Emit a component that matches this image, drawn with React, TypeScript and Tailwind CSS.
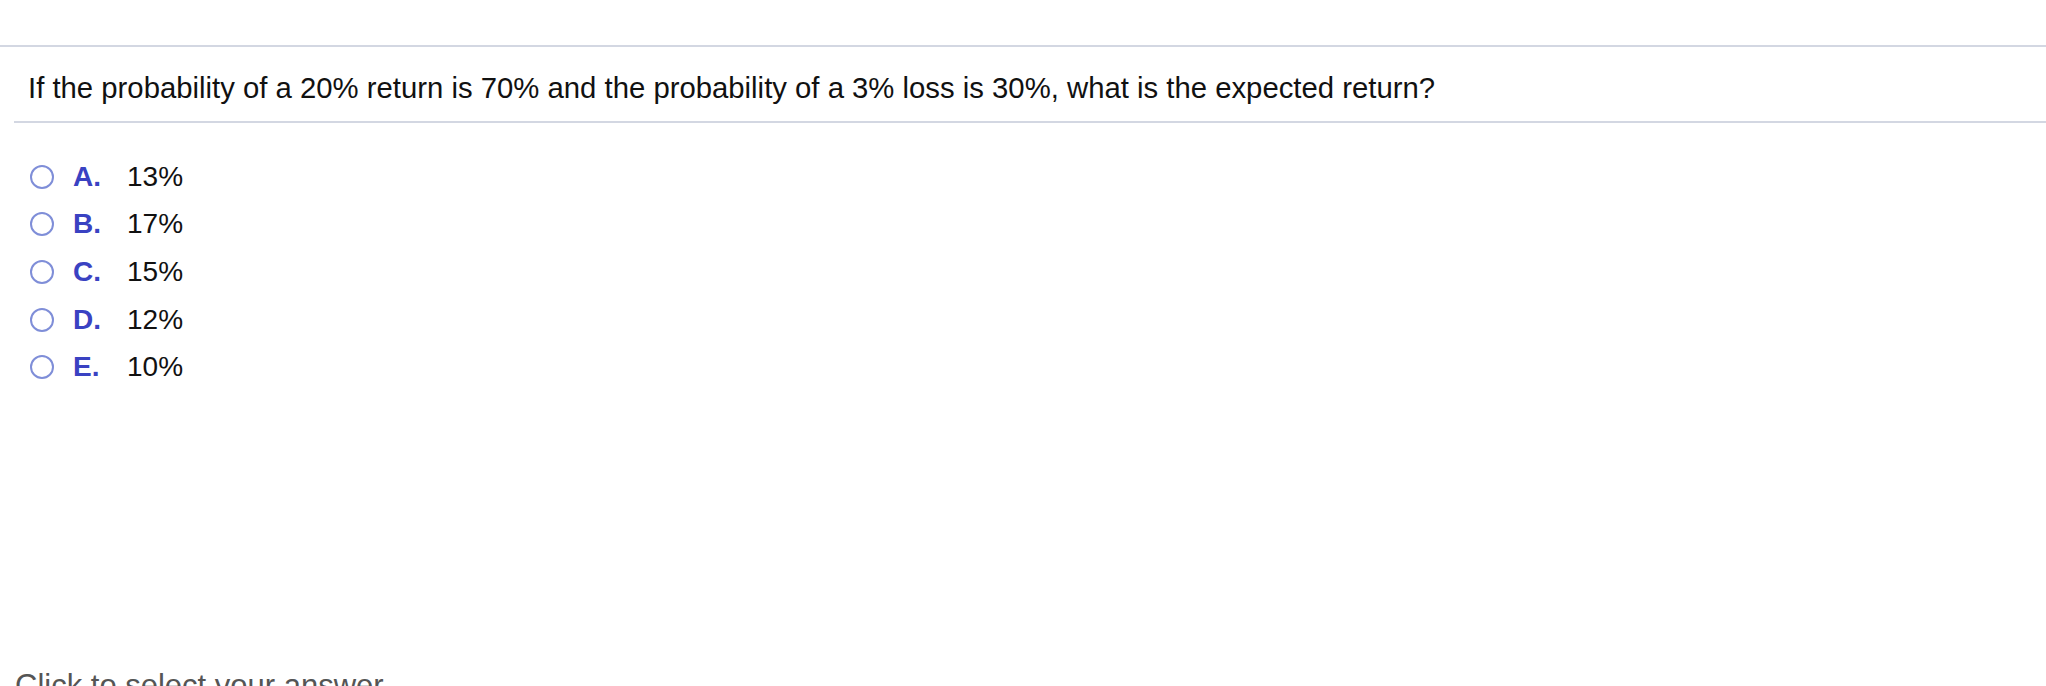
import React from "react";

const options = [
  { key: "A", value: "13%" },
  { key: "B", value: "17%" },
  { key: "C", value: "15%" },
  { key: "D", value: "12%" },
  { key: "E", value: "10%" },
];

export default function App() {
  return (
    <div className="w-[2046px] h-[686px] overflow-hidden bg-white font-['Liberation_Sans',Arial,sans-serif]">
      <div className="h-[45px]" />
      <div className="border-t-2 border-[#d3d7e2]">
        <div className="ml-[14px] border-b-2 border-[#d3d7e2] pl-[14px] pt-[24px] pb-[16px]">
          <p className="text-[29.3px] leading-[34px] text-[#111]">
            If the probability of a 20% return is 70% and the probability of a 3% loss is 30%, what is the expected return?
          </p>
        </div>
      </div>

      {/* answer choices */}
      <div className="pl-[30px] pt-[30px] flex flex-col">
        {options.map((o) => (
          <label key={o.key} className="flex items-center h-[47.6px] cursor-pointer">
            <span className="w-[24px] h-[24px] rounded-full border-[2.5px] border-[#7f8ed8]" />
            <span className="ml-[19px] w-[54px] text-[28px] leading-[32px] font-bold text-[#3a42c2]">{o.key}.</span>
            <span className="text-[28px] leading-[32px] text-[#111]">{o.value}</span>
          </label>
        ))}
      </div>

      <div className="pl-[15px] pt-[277px] text-[31px] leading-[36px] text-[#555]">Click to select your answer.</div>
    </div>
  );
}
